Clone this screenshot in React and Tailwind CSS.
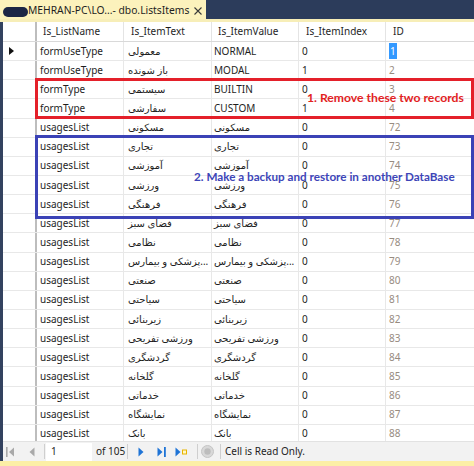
import React from "react";

const rows = [
  ["formUseType", "معمولی", "NORMAL", "0", "1"],
  ["formUseType", "باز شونده", "MODAL", "1", "2"],
  ["formType", "سیستمی", "BUILTIN", "0", "3"],
  ["formType", "سفارشی", "CUSTOM", "1", "4"],
  ["usagesList", "مسکونی", "مسکونی", "0", "72"],
  ["usagesList", "تجاری", "تجاری", "0", "73"],
  ["usagesList", "آموزشی", "آموزشی", "0", "74"],
  ["usagesList", "ورزشی", "ورزشی", "0", "75"],
  ["usagesList", "فرهنگی", "فرهنگی", "0", "76"],
  ["usagesList", "فضای سبز", "فضای سبز", "0", "77"],
  ["usagesList", "نظامی", "نظامی", "0", "78"],
  ["usagesList", "پزشکی و بیمارس...", "پزشکی و بیمارس...", "0", "79"],
  ["usagesList", "صنعتی", "صنعتی", "0", "80"],
  ["usagesList", "سیاحتی", "سیاحتی", "0", "81"],
  ["usagesList", "زیربنائی", "زیربنائی", "0", "82"],
  ["usagesList", "ورزشی تفریحی", "ورزشی تفریحی", "0", "83"],
  ["usagesList", "گردشگری", "گردشگری", "0", "84"],
  ["usagesList", "گلخانه", "گلخانه", "0", "85"],
  ["usagesList", "خدماتی", "خدماتی", "0", "86"],
  ["usagesList", "نمایشگاه", "نمایشگاه", "0", "87"],
  ["usagesList", "بانک", "بانک", "0", "88"],
];

const font = "font-['Noto_Sans','DejaVu_Sans',sans-serif]";

function HeaderRow() {
  return (
    <div className="flex h-[20px] shrink-0 border-b border-[#d9d9d9] bg-white text-[10px] text-[#1e1e1e]">
      <div className="w-[34px] shrink-0 border-r-2 border-[#bdbdbd]" />
      <div className="w-[87px] shrink-0 border-r border-[#e4e4e4] pl-[6px] flex items-center">Is_ListName</div>
      <div className="w-[88px] shrink-0 border-r border-[#e4e4e4] pl-[7px] flex items-center">Is_ItemText</div>
      <div className="w-[87px] shrink-0 border-r border-[#e4e4e4] pl-[6px] flex items-center whitespace-nowrap overflow-hidden">Is_ItemValue</div>
      <div className="w-[87px] shrink-0 border-r border-[#e4e4e4] pl-[7px] flex items-center">Is_ItemIndex</div>
      <div className="flex-1 pl-[7px] flex items-center">ID</div>
    </div>
  );
}

function Row({ r, i }) {
  return (
    <div className="flex h-[19.15px] shrink-0 border-b border-[#e8e8e8] text-[10px] text-[#1e1e1e]">
      <div className="w-[34px] shrink-0 border-r-2 border-[#bdbdbd] flex items-center pl-[6px]">
        {i === 0 && (
          <svg width="5" height="8" viewBox="0 0 5 8">
            <path d="M0 0 L5 4 L0 8 Z" fill="#111" />
          </svg>
        )}
      </div>
      <div className="w-[87px] shrink-0 border-r border-[#e8e8e8] pl-[3px] flex items-center whitespace-nowrap overflow-hidden">{r[0]}</div>
      <div className="w-[88px] shrink-0 border-r border-[#e8e8e8] pl-[4px] flex items-center whitespace-nowrap overflow-hidden">{r[1]}</div>
      <div className="w-[87px] shrink-0 border-r border-[#e8e8e8] pl-[2px] flex items-center whitespace-nowrap overflow-hidden">{r[2]}</div>
      <div className="w-[87px] shrink-0 border-r border-[#e8e8e8] pl-[3px] flex items-center">{r[3]}</div>
      <div className="flex-1 pl-[3px] flex items-center text-[#978b7f]">
        {i === 0 ? <span className="bg-[#3399ff] text-white px-[1px] leading-[16px]">{r[4]}</span> : r[4]}
      </div>
    </div>
  );
}

function Sep() {
  return <div className="w-px h-[15px] bg-[#cfcfcf] shrink-0" />;
}

function NavBar() {
  return (
    <div className="h-[20px] shrink-0 flex items-center bg-[#f2f2f2] border-t border-[#e2e2e2] text-[10px] text-[#1e1e1e]">
      <svg className="ml-[3px] shrink-0" width="9" height="10" viewBox="0 0 9 10">
        <rect x="0" y="0" width="1.6" height="10" fill="#a9a9a9" />
        <path d="M8 0.5 L3 5 L8 9.5 Z" fill="#a9a9a9" />
      </svg>
      <svg className="ml-[14px] shrink-0" width="6" height="10" viewBox="0 0 6 10">
        <path d="M5.5 0.5 L0.5 5 L5.5 9.5 Z" fill="#a9a9a9" />
      </svg>
      <div className="ml-[9px]"><Sep /></div>
      <div className="ml-[1px] w-[46px] h-[18px] bg-white flex items-center pl-[5px] shrink-0">1</div>
      <div className="ml-[4px] w-[30px] shrink-0">of 105</div>
      <div className="ml-[1px]"><Sep /></div>
      <svg className="ml-[10px] shrink-0" width="6" height="10" viewBox="0 0 6 10">
        <path d="M0.5 0.5 L5.5 5 L0.5 9.5 Z" fill="#1f74d6" />
      </svg>
      <svg className="ml-[13px] shrink-0" width="9" height="10" viewBox="0 0 9 10">
        <path d="M0.5 0.5 L5.5 5 L0.5 9.5 Z" fill="#1f74d6" />
        <rect x="7" y="0" width="1.8" height="10" fill="#1f74d6" />
      </svg>
      <svg className="ml-[9px] shrink-0" width="12" height="10" viewBox="0 0 12 10">
        <path d="M0.5 0.5 L5.5 5 L0.5 9.5 Z" fill="#1f74d6" />
        <rect x="7.5" y="3" width="4" height="4" fill="#fff8c8" stroke="#e8b400" strokeWidth="1" />
      </svg>
      <div className="ml-[10px]"><Sep /></div>
      <svg className="ml-[3px] shrink-0" width="13" height="13" viewBox="0 0 13 13">
        <circle cx="6.5" cy="6.5" r="6" fill="#d8d8d8" stroke="#c4c4c4" strokeWidth="1" />
        <circle cx="6.5" cy="6.5" r="3.2" fill="#bdbdbd" />
      </svg>
      <div className="ml-[6px]"><Sep /></div>
      <div className="ml-[4px] whitespace-nowrap">Cell is Read Only.</div>
    </div>
  );
}

export default function App() {
  return (
    <div className={`relative w-[474px] h-[466px] overflow-hidden bg-white flex flex-col ${font}`}>
      <div className="h-[19px] shrink-0 bg-[#2c3c5b] flex">
        <div className="w-[206px] bg-[#fcf2bc] flex items-center">
          <div className="ml-[3px] mt-[5px] w-[25px] h-[10px] rounded-full bg-[#1c2645] shrink-0" />
          <span className="text-[10.3px] text-[#1e1e1e] whitespace-nowrap mt-[2px]">MEHRAN-PC\LO...- dbo.ListsItems</span>
          <svg className="ml-auto mr-[4px] mt-[2px]" width="8" height="8" viewBox="0 0 8 8">
            <path d="M0.5 0.5 L7.5 7.5 M7.5 0.5 L0.5 7.5" stroke="#3a3a3a" strokeWidth="1.1" />
          </svg>
        </div>
      </div>
      <div className="h-[3px] shrink-0 bg-[#f7eeb8]" />
      <div className="flex flex-1 min-h-0">
        <div className="w-[3px] shrink-0 bg-[#33425f]" />
        <div className="flex-1 min-w-0 flex flex-col">
          <div className="flex-1 min-h-0 overflow-hidden flex flex-col bg-white">
            <HeaderRow />
            {rows.map((r, i) => (
              <Row key={i} r={r} i={i} />
            ))}
          </div>
          <NavBar />
        </div>
      </div>
      <div className="h-[5px] shrink-0 bg-[#fcefa6]" />

      <div className="absolute left-[35px] top-[78px] w-[439px] h-[41px] border-[3px] border-[#e4202a]" />
      <div className="absolute left-[307px] top-[90px] text-[12.2px] leading-[16px] font-bold text-[#e2221e] font-['Lato',sans-serif] whitespace-nowrap">
        1. Remove these two records
      </div>
      <div className="absolute left-[35px] top-[135px] w-[439px] h-[84px] border-[3px] border-[#3b42b6]" />
      <div className="absolute left-[194px] top-[168px] text-[11.7px] leading-[16px] font-bold text-[#3d45b8] font-['Lato',sans-serif] whitespace-nowrap">
        2. Make a backup and restore in another DataBase
      </div>
    </div>
  );
}
